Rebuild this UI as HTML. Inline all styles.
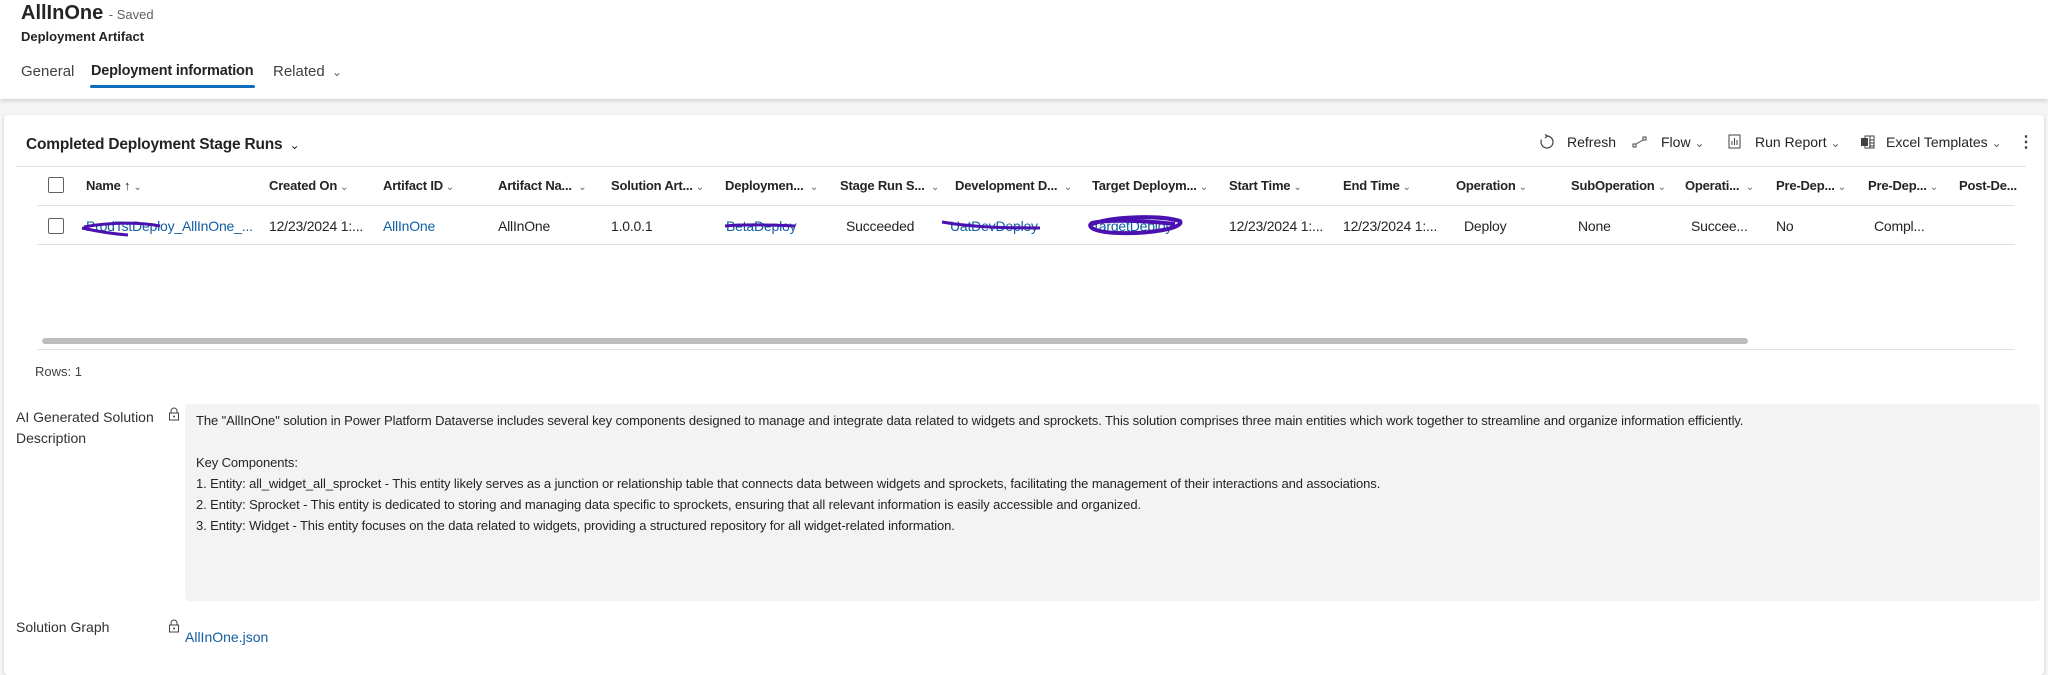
<!DOCTYPE html>
<html><head><meta charset="utf-8"><style>
*{margin:0;padding:0;box-sizing:border-box}
body{width:2048px;height:670px;background:#f5f5f5;font-family:"Liberation Sans",sans-serif;color:#242424;position:relative;overflow:hidden;font-size:14px}
.a{position:absolute;white-space:nowrap}
.card{position:absolute;background:#fff;box-shadow:0 1px 3px rgba(0,0,0,.18)}
.hd{font-weight:bold;font-size:13px;top:178px;letter-spacing:-0.2px}
.cell{top:218px;font-size:14px;letter-spacing:-0.2px}
.lnk{color:#115ea3}
.chev{font-size:10px;color:#616161;margin-left:3px;font-weight:normal}
.cb{position:absolute;width:16px;height:16px;border:1px solid #616161;border-radius:2px;background:#fff}
.hl{position:absolute;height:1px;background:#e0e0e0}
</style></head><body>
<div class="card" style="left:0;top:0;width:2048px;height:99px;box-shadow:0 2px 4px rgba(0,0,0,.15)"></div>
<div class="a" style="left:21px;top:2px;font-size:20px;font-weight:bold">AllInOne <span style="font-size:13px;font-weight:normal;color:#616161">- Saved</span></div>
<div class="a" style="left:21px;top:29px;font-size:13px;font-weight:bold">Deployment Artifact</div>
<div class="a" style="left:21px;top:63px;font-size:15px;color:#424242">General</div>
<div class="a" style="left:91px;top:63px;font-size:14.5px;font-weight:bold;letter-spacing:-0.2px">Deployment information</div>
<div style="position:absolute;left:90px;top:85px;width:165px;height:3px;background:#0f6cbd;border-radius:2px"></div>
<div class="a" style="left:273px;top:63px;font-size:15px;color:#424242">Related <span class="chev" style="font-size:12px">&#8964;</span></div>

<div class="card" style="left:4px;top:115px;width:2040px;height:560px;border-radius:4px"></div>
<div class="a" style="left:26px;top:136px;font-size:15.5px;font-weight:bold;letter-spacing:-0.2px">Completed Deployment Stage Runs <span class="chev" style="font-size:12px;color:#242424">&#8964;</span></div>

<svg class="a" style="left:1538px;top:133px" width="18" height="18" viewBox="0 0 18 18"><path d="M9 3a6 6 0 1 1-5.5 3.6" fill="none" stroke="#424242" stroke-width="1.2"/><path d="M7 1.5 9.5 3 7 5" fill="none" stroke="#424242" stroke-width="1.2"/></svg>
<div class="a" style="left:1567px;top:134px;font-size:14px">Refresh</div>
<svg class="a" style="left:1631px;top:133px" width="18" height="18" viewBox="0 0 18 18"><rect x="2" y="11" width="3" height="3" fill="none" stroke="#424242"/><rect x="12" y="4" width="3" height="3" fill="none" stroke="#424242"/><path d="M5 11 12 7" stroke="#424242"/></svg>
<div class="a" style="left:1661px;top:134px;font-size:14px">Flow <span style="font-size:12px;color:#616161">&#8964;</span></div>
<svg class="a" style="left:1727px;top:133px" width="16" height="18" viewBox="0 0 16 18"><rect x="2" y="2" width="11" height="13" fill="none" stroke="#424242"/><path d="M5 12V8M7.5 12V5M10 12V7" stroke="#424242"/></svg>
<div class="a" style="left:1755px;top:134px;font-size:14px">Run Report <span style="font-size:12px;color:#616161">&#8964;</span></div>
<svg class="a" style="left:1860px;top:133px" width="16" height="18" viewBox="0 0 16 18"><rect x="5" y="3" width="9" height="12" fill="none" stroke="#424242"/><rect x="1" y="5" width="7" height="8" fill="#424242"/><path d="M9 7h5M9 10h5M9 13h5M10 3v12" stroke="#424242"/></svg>
<div class="a" style="left:1886px;top:134px;font-size:14px">Excel Templates <span style="font-size:12px;color:#616161">&#8964;</span></div>
<div class="a" style="left:2018px;top:132px;font-size:16px;font-weight:bold;color:#424242">&#8942;</div>

<div class="hl" style="left:16px;top:166px;width:2010px"></div>
<div class="hl" style="left:37px;top:205px;width:1978px"></div>
<div class="hl" style="left:37px;top:244px;width:1978px"></div>
<div class="cb" style="left:48px;top:177px"></div>
<div class="cb" style="left:48px;top:218px"></div>

<div class="a hd" style="left:86px">Name <span style="font-weight:normal">&#8593;</span><span class="chev">&#8964;</span></div>
<div class="a hd" style="left:269px">Created On<span class="chev">&#8964;</span></div>
<div class="a hd" style="left:383px">Artifact ID<span class="chev">&#8964;</span></div>
<div class="a hd" style="left:498px">Artifact Na... <span class="chev">&#8964;</span></div>
<div class="a hd" style="left:611px">Solution Art...<span class="chev">&#8964;</span></div>
<div class="a hd" style="left:725px">Deploymen... <span class="chev">&#8964;</span></div>
<div class="a hd" style="left:840px">Stage Run S... <span class="chev">&#8964;</span></div>
<div class="a hd" style="left:955px">Development D... <span class="chev">&#8964;</span></div>
<div class="a hd" style="left:1092px">Target Deploym...<span class="chev">&#8964;</span></div>
<div class="a hd" style="left:1229px">Start Time<span class="chev">&#8964;</span></div>
<div class="a hd" style="left:1343px">End Time<span class="chev">&#8964;</span></div>
<div class="a hd" style="left:1456px">Operation<span class="chev">&#8964;</span></div>
<div class="a hd" style="left:1571px">SubOperation<span class="chev">&#8964;</span></div>
<div class="a hd" style="left:1685px">Operati... <span class="chev">&#8964;</span></div>
<div class="a hd" style="left:1776px">Pre-Dep...<span class="chev">&#8964;</span></div>
<div class="a hd" style="left:1868px">Pre-Dep...<span class="chev">&#8964;</span></div>
<div class="a hd" style="left:1959px">Post-De...</div>

<div class="a cell lnk" style="left:86px">ProdTstDeploy_AllInOne_...</div>
<div class="a cell" style="left:269px">12/23/2024 1:...</div>
<div class="a cell lnk" style="left:383px">AllInOne</div>
<div class="a cell" style="left:498px">AllInOne</div>
<div class="a cell" style="left:611px">1.0.0.1</div>
<div class="a cell lnk" style="left:726px">BetaDeploy</div>
<div class="a cell" style="left:846px">Succeeded</div>
<div class="a cell lnk" style="left:950px">UatDevDeploy</div>
<div class="a cell lnk" style="left:1092px">TargetDeploy</div>
<div class="a cell" style="left:1229px">12/23/2024 1:...</div>
<div class="a cell" style="left:1343px">12/23/2024 1:...</div>
<div class="a cell" style="left:1464px">Deploy</div>
<div class="a cell" style="left:1578px">None</div>
<div class="a cell" style="left:1691px">Succee...</div>
<div class="a cell" style="left:1776px">No</div>
<div class="a cell" style="left:1874px">Compl...</div>

<svg class="a" style="left:0;top:0" width="2048" height="260">
<path d="M84 227 C110 222,140 222,160 226 M82 228 C100 232,115 234,128 235" stroke="#4b10b0" stroke-width="3" fill="none"/>
<path d="M725 226 C745 224,770 225,795 226" stroke="#4b10b0" stroke-width="3" fill="none"/>
<path d="M942 222 C965 226,990 228,1040 228" stroke="#4b10b0" stroke-width="3" fill="none"/>
<path d="M1090 225 C1110 216,1160 215,1180 221 C1185 228,1150 234,1120 233 C1100 233,1085 228,1092 223 C1110 219,1150 221,1175 224" stroke="#4b10b0" stroke-width="4" fill="none"/>
</svg>

<div style="position:absolute;left:42px;top:338px;width:1706px;height:6px;background:#bdbdbd;border-radius:3px"></div>
<div class="hl" style="left:37px;top:349px;width:1978px"></div>
<div class="a" style="left:35px;top:364px;font-size:13px;color:#424242">Rows: 1</div>

<div class="a" style="left:16px;top:407px;font-size:14px;line-height:21px;color:#323130">AI Generated Solution<br>Description</div>
<svg class="a" style="left:168px;top:407px" width="12" height="14" viewBox="0 0 12 14"><path d="M3 6V4a3 3 0 0 1 6 0v2" fill="none" stroke="#424242"/><rect x="1.5" y="6" width="9" height="7" fill="none" stroke="#424242"/><circle cx="6" cy="9.5" r="1" fill="#424242"/></svg>
<div style="position:absolute;left:185px;top:404px;width:1855px;height:197px;background:#f3f3f3;border-radius:4px"></div>
<div class="a" style="left:196px;top:410px;font-size:13px;line-height:21px;color:#242424;letter-spacing:-0.1px">The "AllInOne" solution in Power Platform Dataverse includes several key components designed to manage and integrate data related to widgets and sprockets. This solution comprises three main entities which work together to streamline and organize information efficiently.<br><br>Key Components:<br>1. Entity: all_widget_all_sprocket - This entity likely serves as a junction or relationship table that connects data between widgets and sprockets, facilitating the management of their interactions and associations.<br>2. Entity: Sprocket - This entity is dedicated to storing and managing data specific to sprockets, ensuring that all relevant information is easily accessible and organized.<br>3. Entity: Widget - This entity focuses on the data related to widgets, providing a structured repository for all widget-related information.</div>

<div class="a" style="left:16px;top:619px;font-size:14px;color:#323130">Solution Graph</div>
<svg class="a" style="left:168px;top:619px" width="12" height="14" viewBox="0 0 12 14"><path d="M3 6V4a3 3 0 0 1 6 0v2" fill="none" stroke="#424242"/><rect x="1.5" y="6" width="9" height="7" fill="none" stroke="#424242"/><circle cx="6" cy="9.5" r="1" fill="#424242"/></svg>
<div class="a lnk" style="left:185px;top:629px;font-size:14px">AllInOne.json</div>
</body></html>
